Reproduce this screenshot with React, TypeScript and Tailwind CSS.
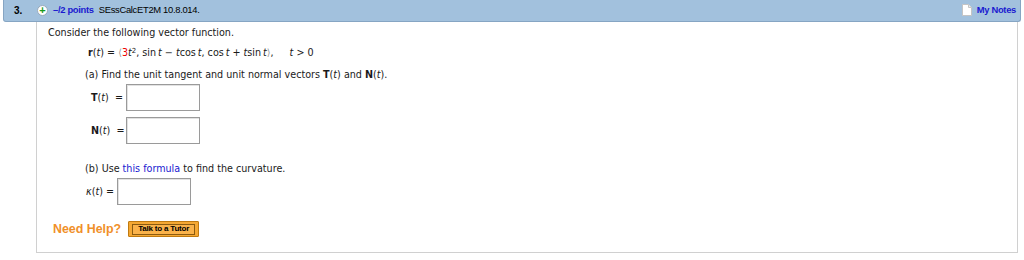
import React from "react";

const verdana = { fontFamily: '"DejaVu Sans", Verdana, sans-serif' };
const arial = { fontFamily: '"Liberation Sans", Arial, sans-serif' };

function AnswerBox() {
  return <div className="w-[74px] h-[27px] border border-[#9a9a9a] bg-white shadow-[inset_1px_1px_0_#e2e2e2]" />;
}

export default function App() {
  return (
    <div className="w-[1024px] h-[260px] bg-white relative overflow-hidden">
      <div
        className="ml-[3px] mr-[3px] h-[22px] bg-[#a2c1dd] border border-t-0 border-[#86a5c3] rounded-b-[3px] flex items-center text-[9.4px] tracking-[-0.3px]"
        style={arial}
      >
        <span className="font-bold text-black ml-[10px] w-[23px] text-[10px] tracking-normal">3.</span>
        <span className="w-[11px] h-[11px] rounded-full bg-white border border-[#9aaabb] flex items-center justify-center">
          <span className="text-[#1a9a1a] font-bold text-[11px] leading-none -mt-[1px] tracking-normal">+</span>
        </span>
        <span className="ml-[5px] font-bold text-[#1a1ad0]">–/2 points</span>
        <span className="ml-[5px] text-black">SEssCalcET2M 10.8.014.</span>
        <span className="ml-auto flex items-center mr-[4px]">
          <svg width="10" height="12" viewBox="0 0 10 12" className="mr-[5px]">
            <path d="M0.5 0.5 H6.5 L9.5 3.5 V11.5 H0.5 Z" fill="#fff" stroke="#c4c4c4" />
            <path d="M6.5 0.5 V3.5 H9.5" fill="#eee" stroke="#c4c4c4" />
          </svg>
          <span className="font-bold text-[#1a1ad0]">My Notes</span>
        </span>
      </div>
      <div
        className="ml-[36px] mr-[6px] h-[231px] border-l border-r border-b border-[#d0d0d0] pl-[11px] pt-[5px] text-[9.6px] leading-[12px] text-[#1a1a1a]"
        style={verdana}
      >
        <div>Consider the following vector function.</div>
        <div className="ml-[40px] mt-[8px] flex items-baseline">
          <span>
            <b>r</b>(<i>t</i>) = <span className="text-[#999]">⟨</span>
            <span className="text-[#e00]">3</span>
            <i>t</i>
            <sup className="text-[7px]">2</sup>, sin{"\u2009"}<i>t</i> − <i>t</i>cos{"\u2009"}<i>t</i>, cos{"\u2009"}<i>t</i> + <i>t</i>sin{"\u2009"}<i>t</i>
            <span className="text-[#999]">⟩</span>,
          </span>
          <span className="ml-[16px]">
            <i>t</i> &gt; 0
          </span>
        </div>
        <div className="ml-[37px] mt-[10px]">
          (a) Find the unit tangent and unit normal vectors <b>T</b>(<i>t</i>) and <b>N</b>(<i>t</i>).
        </div>
        <div className="ml-[43px] mt-[3px] flex items-center">
          <span className="w-[35px]">
            <b>T</b>(<i>t</i>) &nbsp;=
          </span>
          <AnswerBox />
        </div>
        <div className="ml-[43px] mt-[6px] flex items-center">
          <span className="w-[35px]">
            <b>N</b>(<i>t</i>) &nbsp;=
          </span>
          <AnswerBox />
        </div>
        <div className="ml-[37px] mt-[19px]">
          (b) Use <span className="text-[#1a1ad0]">this formula</span> to find the curvature.
        </div>
        <div className="ml-[38px] mt-[3px] flex items-center">
          <span className="w-[31px]">
            <i>κ</i>(<i>t</i>) =
          </span>
          <AnswerBox />
        </div>
        <div className="ml-[5px] mt-[16px] flex items-center" style={arial}>
          <span className="text-[#f0902a] font-bold text-[12.4px] leading-[16px]">Need Help?</span>
          <span className="ml-[7px] h-[16px] w-[71px] border border-[#c07a10] bg-[#f5a833] flex items-center justify-center rounded-[1px]">
            <span className="w-[63px] h-[11px] border border-[#8a5a10] bg-[#fab24a] text-[8px] font-bold text-black flex items-center justify-center leading-none tracking-[-0.2px]">
              Talk to a Tutor
            </span>
          </span>
        </div>
      </div>
    </div>
  );
}
